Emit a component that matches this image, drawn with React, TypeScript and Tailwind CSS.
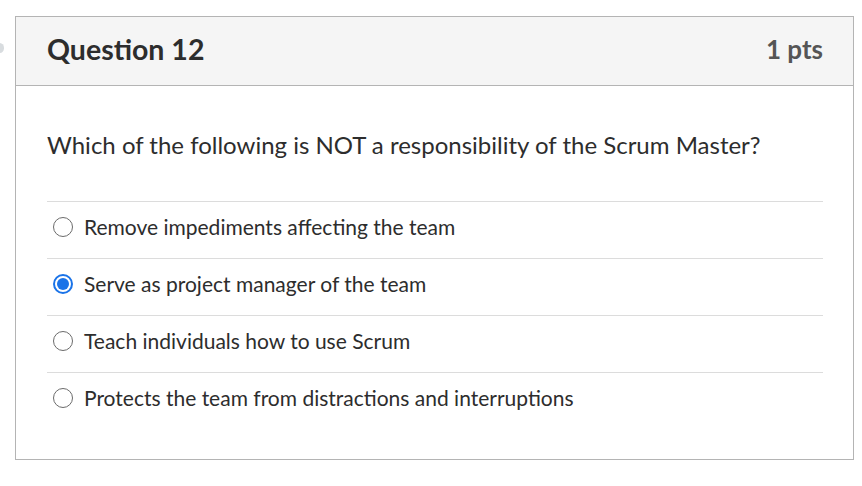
import React from "react";

const options = [
  { text: "Remove impediments affecting the team", checked: false },
  { text: "Serve as project manager of the team", checked: true },
  { text: "Teach individuals how to use Scrum", checked: false },
  { text: "Protects the team from distractions and interruptions", checked: false },
];

const Radio = ({ checked }: { checked: boolean }) =>
  checked ? (
    <span className="flex h-[20px] w-[20px] shrink-0 items-center justify-center rounded-full border-2 border-[#1a73e8] bg-white">
      <span className="h-[12px] w-[12px] rounded-full bg-[#1a73e8]" />
    </span>
  ) : (
    <span className="h-[20px] w-[20px] shrink-0 rounded-full border-[1.5px] border-[#6b6b6b] bg-white" />
  );

export default function App() {
  return (
    <div
      className="relative h-[486px] w-[862px] bg-white pl-[15px] pt-[16px] text-[#2d2d2d]"
      style={{ fontFamily: "Lato, 'Noto Sans', sans-serif" }}
    >
      <span className="absolute left-[-5px] top-[43px] h-[10px] w-[9px] rounded-full bg-[#d8dcdf]" />
      <div className="w-[839px] border border-[#b4b4b4]">
        <div className="flex h-[69px] items-center justify-between border-b border-[#b4b4b4] bg-[#f5f5f5] pb-[4px] pl-[31px] pr-[30px]">
          <h2 className="text-[28.5px] font-bold leading-[34px] text-[#2d2d2d]">Question 12</h2>
          <span className="text-[26px] font-bold leading-[32px] text-[#555]">1 pts</span>
        </div>
        <div className="pb-[30px] pl-[31px] pr-[30px]">
          <p className="mt-[44px] mb-[41px] text-[24px] leading-[30px]">
            Which of the following is NOT a responsibility of the Scrum Master?
          </p>
          {options.map((o) => (
            <div
              key={o.text}
              className="flex h-[57px] items-center gap-[11px] border-t border-[#dcdcdc] pb-[7px] pl-[6px]"
            >
              <Radio checked={o.checked} />
              <span className="text-[21px] leading-[26px]">{o.text}</span>
            </div>
          ))}
        </div>
      </div>
    </div>
  );
}
